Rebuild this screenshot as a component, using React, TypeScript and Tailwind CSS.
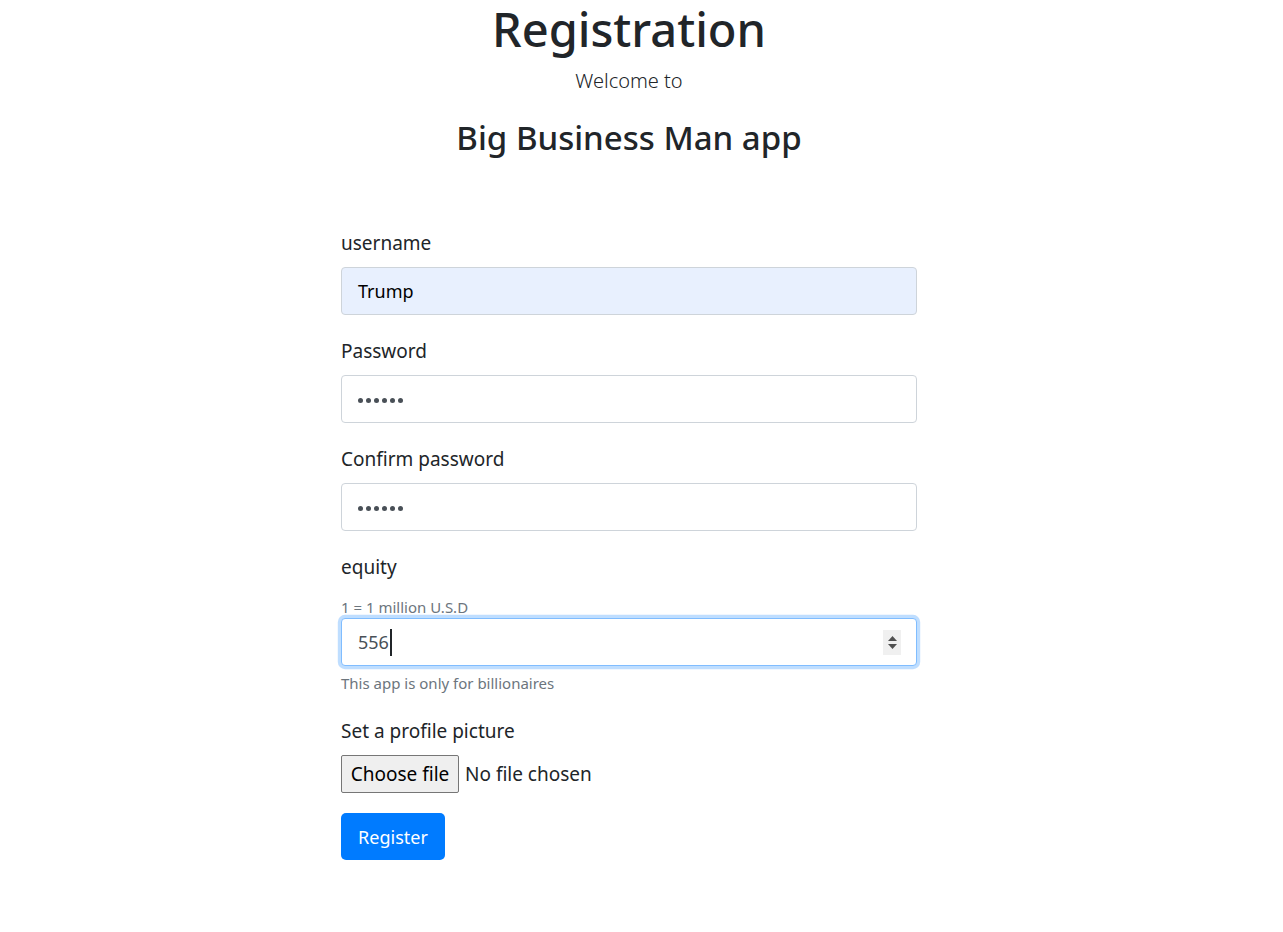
const font = { fontFamily: '"Noto Sans", "Open Sans", sans-serif' };

function Label({ children }: { children: React.ReactNode }) {
  return <div className="mb-[9px] text-[19px] leading-[30px] text-[#212529]">{children}</div>;
}

function Dots() {
  return (
    <div className="flex items-center gap-[3px] pt-[2px]">
      {[0, 1, 2, 3, 4, 5].map((i) => (
        <span key={i} className="block h-[5px] w-[5px] rounded-full bg-[#495057]" />
      ))}
    </div>
  );
}

export default function App() {
  return (
    <div className="min-h-[932px] bg-white text-[#212529]" style={font}>
      <div className="flex w-[1258px] flex-col items-center pt-[1px]">
        <h1 className="text-[47px] font-medium leading-[56px]">Registration</h1>
        <p className="mt-[9px] text-[20px] font-light leading-[30px]">Welcome to</p>
        <h2 className="mt-[22px] text-[33px] font-medium leading-[40px]">Big Business Man app</h2>

        <form className="mt-[70px] w-[576px]">
          <div className="mb-[21px]">
            <Label>username</Label>
            <div className="flex h-[48px] items-center rounded-[4px] border border-[#ced4da] bg-[#e8f0fe] px-4 text-[18px] text-black">
              Trump
            </div>
          </div>

          <div className="mb-[21px]">
            <Label>Password</Label>
            <div className="flex h-[48px] items-center rounded-[4px] border border-[#ced4da] bg-white px-4">
              <Dots />
            </div>
          </div>

          <div className="mb-[21px]">
            <Label>Confirm password</Label>
            <div className="flex h-[48px] items-center rounded-[4px] border border-[#ced4da] bg-white px-4">
              <Dots />
            </div>
          </div>

          <div className="mb-[23px]">
            <Label>equity</Label>
            <div className="mt-[15px] mb-[1px] text-[15px] leading-[20px] text-[#6c757d]">1 = 1 million U.S.D</div>
            <div className="flex h-[48px] items-center rounded-[4px] border border-[#80bdff] bg-white px-4 text-[18px] text-[#495057] shadow-[0_0_0_3.2px_rgba(0,123,255,0.25)]">
              <span>556</span>
              <span className="ml-[1px] block h-[27px] w-[2px] bg-[#212529]" />
              <div className="ml-auto mr-[-1px] flex h-[25px] w-[18px] flex-col items-center justify-center gap-[3px] bg-[#f0f0f0]">
                <svg width="9" height="5" viewBox="0 0 9 5"><path d="M0 5 L4.5 0 L9 5 Z" fill="#505050" /></svg>
                <svg width="9" height="5" viewBox="0 0 9 5"><path d="M0 0 L4.5 5 L9 0 Z" fill="#505050" /></svg>
              </div>
            </div>
            <div className="mt-[7px] text-[15px] leading-[20px] text-[#6c757d]">This app is only for billionaires</div>
          </div>

          <div className="mb-[20px]">
            <Label>Set a profile picture</Label>
            <div className="flex items-center">
              <span className="flex h-[38px] w-[118px] items-center justify-center rounded-[2px] border border-[#767676] bg-[#efefef] text-[19px] text-black">
                Choose file
              </span>
              <span className="ml-[6px] text-[19px] text-[#212529]">No file chosen</span>
            </div>
          </div>

          <button
            type="button"
            className="flex h-[47px] w-[104px] items-center justify-center rounded-[5px] bg-[#007bff] text-[18px] leading-[30px] text-white"
          >
            Register
          </button>
        </form>
      </div>
    </div>
  );
}
